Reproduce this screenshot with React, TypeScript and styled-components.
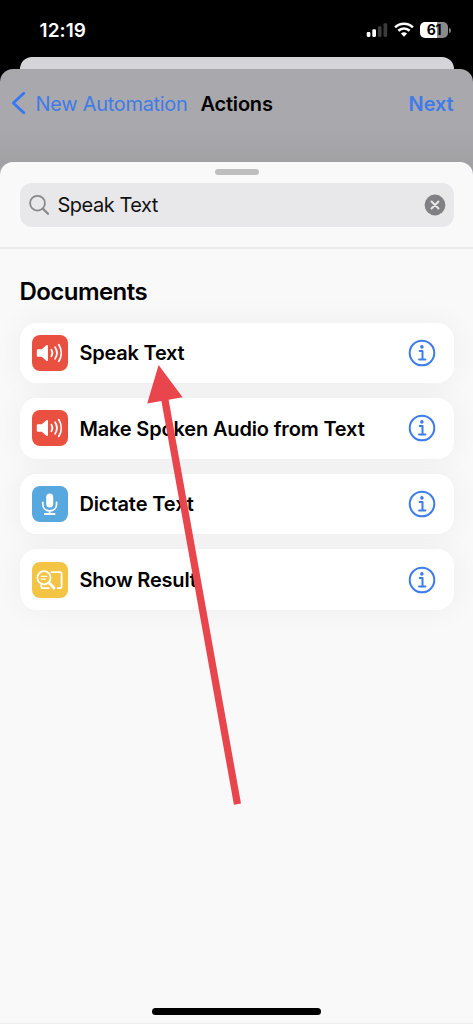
import React from 'react';
import styled, { createGlobalStyle } from 'styled-components';

const GlobalStyle = createGlobalStyle`
  * { box-sizing: border-box; }
  body { margin: 0; background: #000; font-family: Inter, "Liberation Sans", sans-serif; -webkit-font-smoothing: antialiased; }
`;

const Phone = styled.main`
  position: relative;
  width: 473px;
  height: 1024px;
  overflow: hidden;
  display: flex;
  flex-direction: column;
  background: #000;
`;

const StatusBar = styled.header`
  height: 57px;
  flex: none;
  display: flex;
  align-items: center;
  justify-content: space-between;
  padding: 3px 22px 0 39.5px;
`;

const Label = styled.span<{ $size: number; $weight?: number; $track?: number; $color?: string; $drop?: number }>`
  font-size: ${p => p.$size}px;
  font-weight: ${p => p.$weight ?? 400};
  letter-spacing: ${p => p.$track ?? 0}px;
  color: ${p => p.$color ?? '#000'};
  padding-top: ${p => p.$drop ?? 0}px;
  line-height: 1.2;
  white-space: nowrap;
`;

const StatusIcons = styled.div`
  display: flex;
  align-items: center;
  gap: 6px;
`;

const Battery = styled.div`
  position: relative;
  width: 28px;
  height: 16px;
  margin-right: 3px;
  border-radius: 5px;
  background: linear-gradient(90deg, #fff 61%, #8a8a8a 61%);
  display: flex;
  align-items: center;
  justify-content: center;
  &::after {
    content: '';
    position: absolute;
    right: -3px;
    top: 5.5px;
    width: 2px;
    height: 5px;
    border-radius: 0 3px 3px 0;
    background: #777;
  }
`;

const BackSheet = styled.div`
  height: 12px;
  flex: none;
  margin: 0 19.5px;
  border-radius: 12px 12px 0 0;
  background: #d5d4d9;
`;

const NavSheet = styled.section`
  flex: 1;
  display: flex;
  flex-direction: column;
  border-radius: 13px 13px 0 0;
  background: linear-gradient(#a9a8ad 0, #a9a8ad 60px, #a2a2a5 93px);
`;

const NavBar = styled.nav`
  height: 92.5px;
  flex: none;
  display: flex;
  align-items: flex-start;
  padding: 22px 19.5px 0 10.5px;
`;

const BackLink = styled.div`
  display: flex;
  align-items: center;
  gap: 10px;
  width: 190px;
  svg { margin-bottom: 1px; }
`;

const NextLink = styled.div`
  display: flex;
  margin-left: auto;
`;

const Sheet = styled.section`
  flex: 1;
  display: flex;
  flex-direction: column;
  border-radius: 13px 13px 0 0;
  background: #f9f9f9;
  border-bottom: 1px solid #eee;
`;

const SearchArea = styled.div`
  height: 87.5px;
  flex: none;
  display: flex;
  flex-direction: column;
  align-items: center;
  padding: 7px 19.5px 0;
  border-bottom: 2px solid #ececed;
`;

const Grabber = styled.div`
  width: 44px;
  height: 6.5px;
  border-radius: 4px;
  background: #bebebf;
`;

const SearchField = styled.div`
  width: 100%;
  height: 43.5px;
  margin-top: 8px;
  border-radius: 12px;
  background: #e8e8ea;
  display: flex;
  align-items: center;
  padding: 0 7.5px 0 9px;
  gap: 8px;
  svg:last-child { margin-left: auto; }
`;

const Results = styled.div`
  padding: 28px 19.5px 0;
`;

const Heading = styled.h2`
  margin: 0 0 16.5px;
  height: 29px;
  line-height: 29px;
  font-size: 24px;
  font-weight: 600;
  letter-spacing: -0.55px;
`;

const ActionList = styled.div`
  display: flex;
  flex-direction: column;
  gap: 15px;
  isolation: isolate;
`;

const ActionRow = styled.div`
  position: relative;
  height: 60.6px;
  display: flex;
  align-items: center;
  padding: 0 18px 0 12.4px;
  gap: 11.5px;
  border-radius: 17px;
  background: #fff;
  &::before {
    content: '';
    position: absolute;
    inset: 0;
    z-index: -1;
    border-radius: 17px;
    box-shadow: 0 0 30px rgba(0, 0, 0, 0.05);
  }
  > svg { margin-left: auto; }
`;

const Tile = styled.div<{ $color: string }>`
  width: 36px;
  height: 36px;
  flex: none;
  border-radius: 8px;
  background: ${p => p.$color};
  svg { display: block; }
`;

const HomeIndicator = styled.div`
  width: 169px;
  height: 6.5px;
  margin: auto auto 8.5px;
  border-radius: 4px;
  background: #000;
`;

const PointerArrow = styled.svg`
  position: absolute;
  left: 0;
  top: 0;
  pointer-events: none;
`;

const SignalIcon = () => (
  <svg width="22" height="16" viewBox="0 0 22 16">
    <rect x="0.7" y="10" width="3.7" height="4.9" rx="1.1" fill="#fff" />
    <rect x="6.3" y="7.3" width="3.7" height="7.6" rx="1.1" fill="#fff" />
    <rect x="11.9" y="4.3" width="3.7" height="10.6" rx="1.1" fill="#3b3b3b" />
    <rect x="17.5" y="1.2" width="3.7" height="13.7" rx="1.1" fill="#3b3b3b" />
  </svg>
);

const WifiIcon = () => (
  <svg width="20" height="16" viewBox="0 0 20 16" fill="none" stroke="#fff" strokeWidth="2.7">
    <path d="M1.1 5.4a12.7 12.7 0 0 1 17.8 0" />
    <path d="M4.4 8.8a8 8 0 0 1 11.2 0" />
    <path d="M10 14.7 6.9 11.6a4.5 4.5 0 0 1 6.2 0Z" fill="#fff" stroke="none" />
  </svg>
);

const Chevron = () => (
  <svg width="15" height="24" viewBox="0 0 15 24" fill="none">
    <path d="M12.8 2.2 2.3 12l10.5 9.8" stroke="#3478f6" strokeWidth="2.8" strokeLinecap="round" strokeLinejoin="round" />
  </svg>
);

const SearchIcon = () => (
  <svg width="21" height="22" viewBox="0 0 21 22" fill="none" stroke="#88888c" strokeLinecap="round">
    <circle cx="8.5" cy="9.2" r="7.4" strokeWidth="1.8" />
    <path d="m14 14.8 5 5" strokeWidth="2.3" />
  </svg>
);

const ClearIcon = () => (
  <svg width="22" height="22" viewBox="0 0 22 22">
    <circle cx="11" cy="11" r="10.4" fill="#808085" />
    <path d="m7.5 7.5 7 7m0-7-7 7" stroke="#e8e8ea" strokeWidth="1.9" strokeLinecap="round" />
  </svg>
);

const InfoIcon = () => (
  <svg width="28" height="28" viewBox="0 0 28 28" fill="none" stroke="#3d7cea">
    <circle cx="14" cy="14" r="12.3" strokeWidth="2" />
    <circle cx="13.9" cy="7.9" r="1.8" fill="#3d7cea" stroke="none" />
    <path d="M11.7 12h2.8v8.5m-3.4 0h6.3" strokeWidth="2" strokeLinecap="round" strokeLinejoin="round" />
  </svg>
);

const SpeakerIcon = () => (
  <svg width="36" height="36" viewBox="0 0 36 36" fill="none" stroke="#fff" strokeWidth="1.8" strokeLinecap="round">
    <path d="M6.2 14.2h3.5l4.7-4c.6-.5 1.6-.2 1.6.6v14.4c0 .8-1 1.1-1.6.6l-4.7-4H6.2c-.9 0-1.4-.5-1.4-1.4v-4.8c0-.9.5-1.4 1.4-1.4Z" fill="#fff" stroke="none" />
    <path d="M19.4 14.8a6 6 0 0 1 0 6.4M23.1 12.3a10.5 10.5 0 0 1 0 11.4M26.8 9.8a15 15 0 0 1 0 16.4" />
  </svg>
);

const MicIcon = () => (
  <svg width="36" height="36" viewBox="0 0 36 36" fill="none" stroke="#fff" strokeWidth="1.8" strokeLinecap="round">
    <rect x="14.2" y="7.4" width="7" height="14" rx="3.5" fill="#fff" stroke="none" />
    <path d="M10.8 16.5v1.4c0 4.2 2.9 7 6.9 7s6.9-2.8 6.9-7v-1.4M17.7 24.9v3M12.8 28h9.8" />
  </svg>
);

const ResultIcon = () => (
  <svg width="36" height="36" viewBox="0 0 36 36" fill="none" stroke="#fff" strokeWidth="1.8" strokeLinecap="round" strokeLinejoin="round">
    <path d="M19.5 10.2H28c1 0 1.6.6 1.6 1.6v12.7c0 1-.6 1.6-1.6 1.6h-2.3M9.2 22.4v2.1c0 1 .6 1.6 1.6 1.6h6" />
    <circle cx="12" cy="15.8" r="6.6" />
    <path d="M9.2 14.3h5.7M9.2 17.1h4.2" strokeWidth="1.3" />
    <path d="m17 20.8 5 5.2" strokeWidth="2.9" />
  </svg>
);

const actions = [
  { name: 'Speak Text', track: -0.22, color: '#e9503f', icon: <SpeakerIcon /> },
  { name: 'Make Spoken Audio from Text', track: -0.16, color: '#e9503f', icon: <SpeakerIcon /> },
  { name: 'Dictate Text', track: -0.1, color: '#57a8df', icon: <MicIcon /> },
  { name: 'Show Result', track: -0.2, color: '#f4c444', icon: <ResultIcon /> },
];

export default function App() {
  return (
    <>
      <GlobalStyle />
      <Phone>
        <StatusBar>
          <Label $size={19} $weight={600} $track={0.1} $color="#fff" $drop={2}>12:19</Label>
          <StatusIcons>
            <SignalIcon />
            <WifiIcon />
            <Battery><Label $size={14} $weight={700} $track={-0.3}>61</Label></Battery>
          </StatusIcons>
        </StatusBar>
        <BackSheet />
        <NavSheet>
          <NavBar>
            <BackLink>
              <Chevron />
              <Label $size={20} $track={-0.3} $color="#3f7be9" $drop={1}>New Automation</Label>
            </BackLink>
            <Label $size={20} $weight={600} $track={-0.2} $drop={1}>Actions</Label>
            <NextLink><Label $size={20} $weight={600} $track={-0.1} $color="#3f7be9" $drop={1}>Next</Label></NextLink>
          </NavBar>
          <Sheet>
            <SearchArea>
              <Grabber />
              <SearchField>
                <SearchIcon />
                <Label $size={20} $track={-0.48} $color="#111" $drop={1}>Speak Text</Label>
                <ClearIcon />
              </SearchField>
            </SearchArea>
            <Results>
              <Heading>Documents</Heading>
              <ActionList>
                {actions.map(a => (
                  <ActionRow key={a.name}>
                    <Tile $color={a.color}>{a.icon}</Tile>
                    <Label $size={20} $weight={600} $track={a.track} $drop={1}>{a.name}</Label>
                    <InfoIcon />
                  </ActionRow>
                ))}
              </ActionList>
            </Results>
            <HomeIndicator />
          </Sheet>
        </NavSheet>
        <PointerArrow width="473" height="1024" viewBox="0 0 473 1024" fill="#e8464c">
          <path d="M158.6 365 182.6 397.3 168.6 399.7 241 803.6 233.9 804.8 161.4 401 147.2 403.5Z" />
        </PointerArrow>
      </Phone>
    </>
  );
}
